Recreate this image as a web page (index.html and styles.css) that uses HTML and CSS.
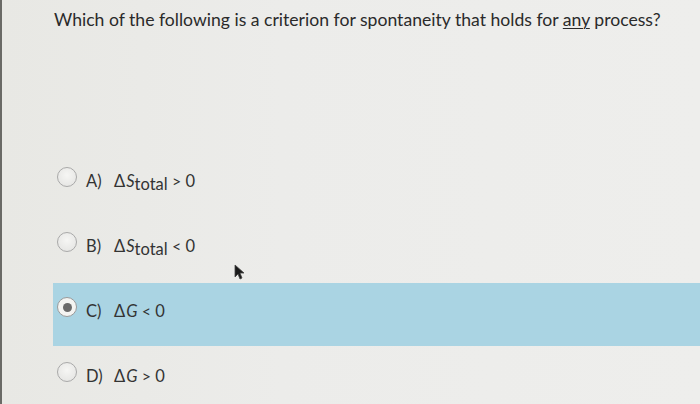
FILE: index.html
```html
<!DOCTYPE html>
<html>
<head>
<meta charset="utf-8">
<link rel="stylesheet" href="styles.css">
</head>
<body>
<div class="page">
  <p class="question">Which of the following is a criterion for spontaneity that holds for <u>any</u> process?</p>
  <div class="options">
    <div class="option">
      <span class="radio"></span>
      <span class="label">A)</span>
      <span class="expr">&Delta;<i>S</i><span class="sub">total</span> <span class="op">&gt;</span> 0</span>
    </div>
    <div class="option">
      <span class="radio"></span>
      <span class="label">B)</span>
      <span class="expr">&Delta;<i>S</i><span class="sub">total</span> <span class="op">&lt;</span> 0</span>
    </div>
    <div class="option selected">
      <span class="radio checked"></span>
      <span class="label">C)</span>
      <span class="expr">&Delta;<i>G</i> <span class="op">&lt;</span> 0</span>
    </div>
    <div class="option">
      <span class="radio"></span>
      <span class="label">D)</span>
      <span class="expr">&Delta;<i>G</i> <span class="op">&gt;</span> 0</span>
    </div>
  </div>
  <svg class="cursor" width="12" height="16" viewBox="0 0 12 16"><path d="M1 1 L1 13 L4 10 L6 15 L8 14 L6 9 L10 9 Z" fill="#1a1a1a" stroke="#444" stroke-width="0.8"/></svg>
</div>
</body>
</html>
```
FILE: styles.css
```css
html, body {
  margin: 0;
  padding: 0;
}
body {
  background: #ebebe9;
  font-family: Lato, "Open Sans", sans-serif;
  color: #2f2f2f;
}
.page {
  position: relative;
  width: 698px;
  height: 404px;
  border-left: 2px solid #6a6a66;
  background: linear-gradient(90deg, #e8e8e4 0%, #ececea 40%, #eeeeec 100%);
  overflow: hidden;
}
.question {
  margin: 0;
  padding: 10px 0 0 52px;
  font-size: 17.6px;
  line-height: 20px;
  color: #2a2a2a;
}
.question u {
  text-decoration-thickness: 1px;
  text-underline-offset: 2px;
}
.options {
  margin: 123px 0 0 51px;
  display: flex;
  flex-direction: column;
  gap: 2px;
}
.option {
  height: 63px;
  display: flex;
  align-items: flex-start;
  padding: 14px 0 0 4px;
  box-sizing: border-box;
  font-size: 16.5px;
  color: #333;
}
.option.selected {
  background: #aad4e3;
}
.radio {
  width: 18px;
  height: 18px;
  border-radius: 50%;
  border: 1px solid #a9a9a9;
  background: radial-gradient(circle at 50% 40%, #f6f6f4 0%, #e2e2e0 100%);
  box-sizing: content-box;
  flex: none;
  display: flex;
  align-items: center;
  justify-content: center;
  margin-right: 9px;
}
.radio.checked {
  border-color: #9a9a9a;
  background: #f4f4f2;
}
.radio.checked::after {
  content: "";
  width: 9px;
  height: 9px;
  border-radius: 50%;
  background: #6a6a6a;
}
.label {
  width: 28px;
  line-height: 22px;
  padding-top: 3px;
}
.expr {
  line-height: 22px;
  padding-top: 3px;
  white-space: nowrap;
}
.expr i {
  font-style: italic;
  margin-left: 1px;
}
.sub {
  vertical-align: -3px;
}
.op {
  font-size: 16px;
}
.cursor {
  position: absolute;
  left: 232px;
  top: 264px;
}
```
